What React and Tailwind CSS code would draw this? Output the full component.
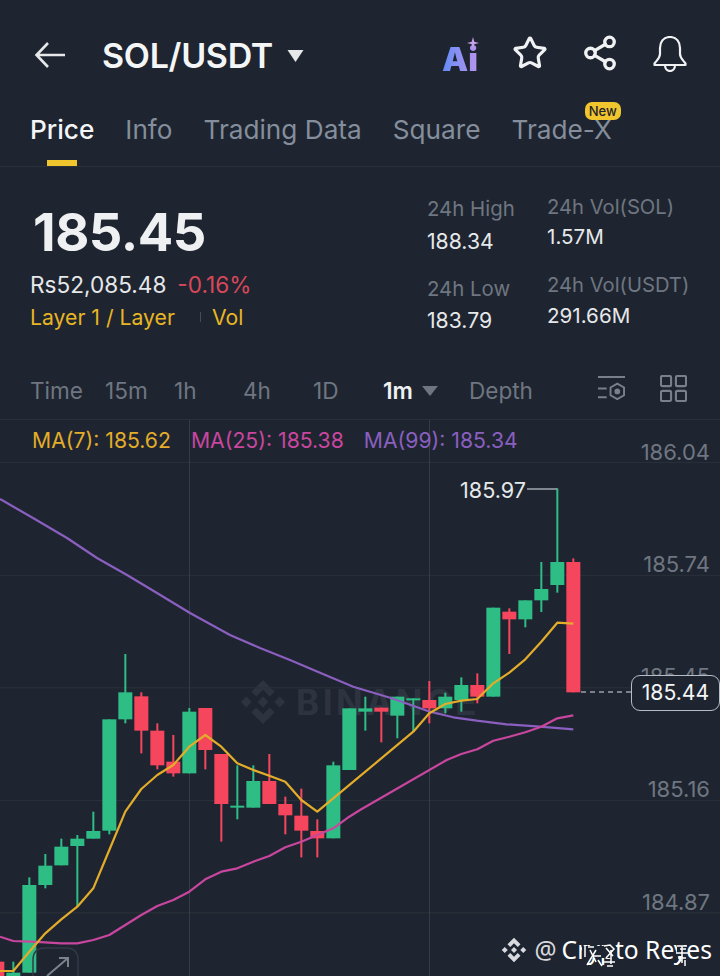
import { Share2, Star } from 'lucide-react'

const GREEN = '#2ebd85'
const RED = '#f6465d'

// [centerX, wickTop, wickBottom, bodyTop, bodyBottom, up]
const leftCandles = [
  [-8, 965, 1008, 965, 1040, 0],
  [40, 965, 1100, 998, 1100, 1],
  [88, 712, 998, 735, 998, 1],
  [136, 642, 745, 677, 735, 1],
  [184, 596, 676, 620, 676, 1],
  [232, 585, 800, 596, 618, 1],
  [280, 515, 596, 573, 596, 1],
  [328, 238, 583, 238, 572, 1],
  [376, 42, 250, 157, 238, 1],
  [424, 157, 340, 169, 272, 0],
  [472, 250, 388, 272, 376, 0],
  [520, 285, 410, 365, 400, 0],
  [568, 204, 400, 215, 400, 1],
  [616, 204, 388, 204, 330, 0],
  [664, 342, 605, 342, 492, 0],
  [712, 376, 538, 497, 503, 1],
  [760, 376, 503, 423, 503, 1],
  [808, 342, 492, 423, 492, 0],
  [856, 470, 583, 492, 526, 0],
  [904, 446, 652, 527, 572, 0],
  [952, 538, 652, 573, 595, 0],
  [1000, 365, 595, 376, 595, 1],
].map(([x, a, b, c, d, up]) => [x / 3, 640 + a / 3, 640 + b / 3, 640 + c / 3, 640 + d / 3, up])

const rightCandles = [
  [88, 715, 900, 715, 900, 1],
  [136, 680, 782, 715, 725, 1],
  [184, 713, 817, 713, 725, 0],
  [232, 680, 805, 680, 737, 1],
  [280, 685, 785, 685, 690, 1],
  [328, 633, 760, 690, 715, 0],
  [376, 668, 730, 680, 715, 1],
  [424, 622, 725, 645, 690, 1],
  [472, 610, 700, 645, 680, 0],
  [520, 413, 680, 413, 680, 1],
  [568, 415, 552, 425, 448, 0],
  [616, 391, 472, 391, 448, 1],
  [664, 276, 426, 357, 391, 1],
  [712, 55, 368, 276, 345, 1],
  [760, 265, 667, 276, 667, 0],
].map(([x, a, b, c, d, up]) => [320 + x / 3, 470 + a / 3, 470 + b / 3, 470 + c / 3, 470 + d / 3, up])

const candles = [...leftCandles, ...rightCandles]

const toLeft = (pts) => pts.map(([x, y]) => `${(x / 3).toFixed(1)},${(640 + y / 3).toFixed(1)}`).join(' ')
const toRight = (pts) => pts.map(([x, y]) => `${(320 + x / 3).toFixed(1)},${(470 + y / 3).toFixed(1)}`).join(' ')

const ma7 =
  toLeft([[0, 993], [40, 993], [88, 935], [136, 880], [184, 838], [232, 800], [280, 745], [328, 630], [376, 515], [424, 447], [472, 405], [520, 375], [568, 320], [616, 285], [664, 320], [712, 370], [760, 390], [808, 407], [856, 425], [904, 480], [952, 515]]) +
  ' ' +
  toRight([[280, 785], [328, 730], [376, 702], [424, 692], [472, 687], [520, 640], [568, 608], [616, 568], [664, 515], [712, 458], [760, 461]])

const ma25 =
  toLeft([[0, 890], [40, 903], [88, 905], [136, 907], [184, 910], [232, 910], [280, 900], [328, 885], [376, 855], [424, 825], [472, 798], [520, 780], [568, 755], [616, 718], [664, 695], [712, 685], [760, 665], [808, 648], [856, 622], [904, 605], [952, 585], [1000, 565], [1048, 530], [1080, 510]]) +
  ' ' +
  toRight([[380, 870], [424, 852], [472, 838], [520, 812], [568, 800], [616, 787], [664, 770], [712, 745], [760, 736]])

const ma99 =
  '0,499 33,518 67,538 97,558 127,575 157,593 190,613 230,635 260,648 290,660 ' +
  toRight([[0, 608], [100, 650], [215, 685], [330, 725], [400, 742], [470, 752], [560, 763], [660, 770], [760, 778]])

const axisLabels = [
  ['186.04', 'top-[19px]'],
  ['185.74', 'top-[131px]'],
  ['185.45', 'top-[243px]'],
  ['185.16', 'top-[356px]'],
  ['184.87', 'top-[469px]'],
]

const intervals = [
  ['Time', 'w-[75px]'],
  ['15m', 'w-[69px]'],
  ['1h', 'w-[69px]'],
  ['4h', 'w-[70px]'],
  ['1D', 'w-[70px]'],
]

function BinanceMark({ className, fill }) {
  return (
    <svg viewBox="0 0 24 24" className={className} fill={fill}>
      <path d="M12 2.200 17.200 7.400 15 9.600 12 6.600 9 9.600 6.800 7.400Z" />
      <path d="M12 21.800 6.800 16.600 9 14.400 12 17.400 15 14.400 17.200 16.600Z" />
      <path d="M4.600 9.600 7 12 4.600 14.400 2.200 12Z" />
      <path d="M19.400 9.600 21.800 12 19.400 14.400 17 12Z" />
      <path d="M12 9.600 14.400 12 12 14.400 9.600 12Z" />
    </svg>
  )
}

function Chart() {
  return (
    <svg viewBox="0 420 720 556" className="block h-full w-full">
      {[462.6, 575.3, 687.8, 800.6, 912.8].map((y) => (
        <line key={y} x1="0" x2="720" y1={y} y2={y} stroke="#2b313b" strokeWidth="1" />
      ))}
      {[189.5, 429.5].map((x) => (
        <line key={x} x1={x} x2={x} y1="420" y2="976" stroke="#363c47" strokeWidth="1" />
      ))}
      {candles.map(([x, wickTop, wickBottom, bodyTop, bodyBottom, up]) => (
        <g key={x} fill={up ? GREEN : RED}>
          <rect x={x - 1} y={wickTop} width="2" height={wickBottom - wickTop} />
          <rect x={x - 7} y={bodyTop} width="14" height={Math.max(bodyBottom - bodyTop, 2)} />
        </g>
      ))}
      <polyline points={ma99} fill="none" stroke="#8a5fc0" strokeWidth="2.2" strokeLinejoin="round" />
      <polyline points={ma25} fill="none" stroke="#c9469f" strokeWidth="2.2" strokeLinejoin="round" />
      <polyline points={ma7} fill="none" stroke="#e3ac2a" strokeWidth="2.2" strokeLinejoin="round" />
      <path d="M527 489H557" stroke="#a3a8b0" strokeWidth="1.500" fill="none" />
      <path d="M581 692H631" stroke="#9aa0a8" strokeWidth="1.500" strokeDasharray="5 4" fill="none" />
      <path d="M33 976V960Q33 948 45 948H66Q78 948 78 960V976" stroke="#333945" strokeWidth="1.500" fill="none" />
      <path d="M47 976 68 958M59 958H68V967" stroke="#7c828c" strokeWidth="2" fill="none" />
    </svg>
  )
}

// scrambled bits the screenshot has on top of the watermark letters
function WatermarkNoise() {
  return (
    <svg viewBox="560 930 160 46" className="absolute bottom-0 right-0 h-[46px] w-[160px]" fill="none">
      <rect x="582" y="946" width="34" height="12" fill="#1e2530" />
      <rect x="677" y="946" width="10" height="10" fill="#1e2530" />
      <g stroke="#ffffff" strokeWidth="1.500">
        <path d="M585 945V957M588 947H594M590 950 596 962M596 950 587 965M592 956H601M598 960 602 966" />
        <path d="M604 946 610 945 614 949 606 958M606 948 613 956M611 950V964M603 962H615M607 966H613" />
        <path d="M677 946H687M680 949H686M676 953H688M682 946V963M678 958H686M677 964 681 960M685 960V966" />
      </g>
    </svg>
  )
}

export default function App() {
  return (
    <div className="h-[976px] w-[720px] overflow-hidden bg-[#1e2530] font-['Inter',sans-serif] text-white">
      <div className="flex h-[110px] items-center pl-[34px] pr-[33px]">
        <svg viewBox="0 0 32 28" className="h-[28px] w-[32px]" fill="none" stroke="#e6e8ea" strokeWidth="2.600">
          <path d="M31 14H3M14 2 2.500 14 14 26" />
        </svg>
        <span className="ml-[36px] text-[34px] font-semibold tracking-[-0.3px] text-[#f4f5f6]">SOL/USDT</span>
        <svg viewBox="0 0 16 12" className="ml-[14px] mt-[2px] h-[12px] w-[17px]" fill="#e6e8ea">
          <path d="M0 0H16L8 12Z" />
        </svg>
        <div className="relative ml-auto mr-[34px] h-[40px] w-[36px]">
          <span className="absolute bottom-[-2px] left-0 bg-gradient-to-r from-[#5f8cf5] to-[#b893ee] bg-clip-text text-[33px] font-black leading-[36px] text-transparent">
            Ai
          </span>
          <svg viewBox="0 0 12 12" className="absolute right-[-1px] top-[2px] h-[12px] w-[12px]" fill="#c8a0e8">
            <path d="M6 0 7.300 4.700 12 6 7.300 7.300 6 12 4.700 7.300 0 6 4.700 4.700Z" />
          </svg>
        </div>
        <Star size={36} strokeWidth={2.1} color="#f0f1f2" className="mb-[4px] mr-[33px]" />
        <Share2 size={38} strokeWidth={2.1} color="#f0f1f2" className="mb-[4px] mr-[34px]" />
        <svg viewBox="0 0 34 36" className="mb-[2px] h-[36px] w-[34px]" fill="none" stroke="#f0f1f2" strokeWidth="2.200" strokeLinejoin="round">
          <path d="M17 1C10 1 7 6.500 7 12V18C7 22 4 24 1.500 27.500V29H32.500V27.500C30 24 27 22 27 18V12C27 6.500 24 1 17 1Z" />
          <path d="M12 29C12 32.500 14 35 17 35S22 32.500 22 29" />
        </svg>
      </div>

      <div className="h-[57px] border-b border-[#2a303a] pl-[30px]">
        <div className="flex gap-[31px] text-[26.2px] leading-[40px] text-[#848e9c]">
          <div className="relative h-[56px]">
            <span className="font-medium text-[#f4f5f6]">Price</span>
            <div className="absolute bottom-0 left-[17px] h-[6px] w-[30px] bg-[#f0c52e]" />
          </div>
          <span>Info</span>
          <span>Trading Data</span>
          <span>Square</span>
          <div className="relative">
            <span>Trade-X</span>
            <span className="absolute right-[-9px] top-[-8px] rounded-[7px] bg-[#f0c52e] px-[4px] text-[13px] font-medium leading-[18px] text-[#1e2329]">
              New
            </span>
          </div>
        </div>
      </div>

      <div className="flex h-[187px]">
        <div className="w-[427px] pl-[30px]">
          <div className="ml-[3px] mt-[33px] text-[52.5px] font-bold leading-[64px] tracking-[-0.5px] text-[#eef0f2]">185.45</div>
          <div className="mt-[6px] flex gap-[11px] text-[22.6px] leading-[30px]">
            <span className="text-[#e6e8ea]">Rs52,085.48</span>
            <span className="text-[#d9475a]">-0.16%</span>
          </div>
          <div className="mt-[2px] flex items-center text-[21.2px] leading-[30px] text-[#e8b524]">
            <span>Layer 1 / Layer</span>
            <span className="ml-[25px] mr-[11px] h-[10px] w-px bg-[#474d57]" />
            <span>Vol</span>
          </div>
        </div>
        <div className="w-[120px] pt-[27px]">
          <div className="text-[20.4px] leading-[30px] text-[#6f7681]">24h High</div>
          <div className="mt-[2px] text-[21.2px] leading-[30px] text-[#e6e8ea]">188.34</div>
          <div className="mt-[18px] text-[20.4px] leading-[30px] text-[#6f7681]">24h Low</div>
          <div className="mt-[1px] text-[21.2px] leading-[30px] text-[#e6e8ea]">183.79</div>
        </div>
        <div className="pt-[25px]">
          <div className="whitespace-nowrap text-[20.2px] leading-[30px] text-[#6f7681]">24h Vol(SOL)</div>
          <div className="text-[20.6px] leading-[30px] text-[#e6e8ea]">1.57M</div>
          <div className="mt-[18px] whitespace-nowrap text-[20.2px] leading-[30px] text-[#6f7681]">24h Vol(USDT)</div>
          <div className="mt-[1px] text-[20.6px] leading-[30px] text-[#e6e8ea]">291.66M</div>
        </div>
      </div>

      <div className="flex h-[66px] items-center border-b border-[#2a303a] pl-[30px] pt-[8px] text-[22.6px] text-[#6f7681]">
        {intervals.map(([label, width]) => (
          <span key={label} className={width}>
            {label}
          </span>
        ))}
        <span className="font-semibold text-[#f0f1f2]">1m</span>
        <svg viewBox="0 0 16 10" className="ml-[9px] h-[10px] w-[16px]" fill="#6f7681">
          <path d="M0 0H16L8 10Z" />
        </svg>
        <span className="ml-[31px]">Depth</span>
        <svg viewBox="0 0 30 28" className="mb-[5px] ml-[64px] h-[27px] w-[29px]" fill="none" stroke="#7a808a" strokeWidth="2">
          <path d="M1 2H29M1 14H10M1 23H10M21 9 28 13V21L21 25 14 21V13Z" />
          <circle cx="21" cy="17" r="2" fill="#7a808a" />
        </svg>
        <svg viewBox="0 0 28 28" className="mb-[5px] ml-[34px] h-[27px] w-[27px]" fill="none" stroke="#7a808a" strokeWidth="2.200">
          <rect x="1" y="1" width="10.500" height="10.500" rx="1.500" />
          <rect x="16.500" y="1" width="10.500" height="10.500" rx="1.500" />
          <rect x="1" y="16.500" width="10.500" height="10.500" rx="1.500" />
          <rect x="16.500" y="16.500" width="10.500" height="10.500" rx="1.500" />
        </svg>
      </div>

      <div className="relative h-[556px]">
        {/* watermark sits under the candles */}
        <div className="absolute left-[236px] top-[255px] flex items-center gap-[6px] text-[#2e343f]">
          <BinanceMark className="h-[54px] w-[54px]" fill="#2e343f" />
          <span className="text-[35px] font-bold leading-[54px] tracking-[3.5px]">BINANCE</span>
        </div>
        <div className="absolute inset-0">
          <Chart />
        </div>
        <div className="absolute left-[32px] top-[6px] flex gap-[20px] text-[21.2px] leading-[28px]">
          <span className="text-[#e3ac2a]">MA(7): 185.62</span>
          <span className="text-[#c9469f]">MA(25): 185.38</span>
          <span className="text-[#8a5fc0]">MA(99): 185.34</span>
        </div>
        {axisLabels.map(([label, top]) => (
          <span key={label} className={`absolute right-[10px] text-[22px] leading-[26px] text-[#6f7681] ${top}`}>
            {label}
          </span>
        ))}
        <span className="absolute left-[460px] top-[57px] text-[21.6px] leading-[26px] text-[#e6e8ea]">185.97</span>
        <div className="absolute left-[631px] top-[255px] flex h-[36px] w-[89px] items-center justify-center rounded-[9px] border border-[#b7bdc6] bg-[#1e2530] text-[21.2px] text-[#f4f5f6]">
          185.44
        </div>
        <div className="absolute right-[8px] top-[515px] flex items-center gap-[5px] font-['Noto_Sans',sans-serif] text-[24.6px] leading-[30px]">
          <BinanceMark className="h-[30px] w-[30px]" fill="#d8dadd" />
          <span className="text-[#d8dadd]">@</span>
          <span className="text-white">Crypto Reyes</span>
        </div>
        <WatermarkNoise />
      </div>
    </div>
  )
}
